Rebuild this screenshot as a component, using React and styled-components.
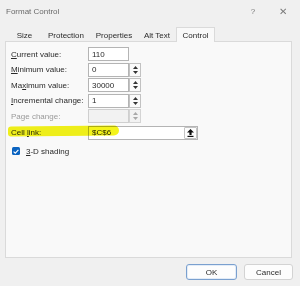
import React from "react";
import styled, { createGlobalStyle } from "styled-components";

const Global = createGlobalStyle`
  html, body { margin: 0; padding: 0; background: #f0f0f0; }
  body { font-family: "Liberation Sans", Arial, sans-serif; font-size: 8px; color: #2a2a2a; }
  * { box-sizing: border-box; }
`;

const Dialog = styled.div`
  width: 300px;
  height: 286px;
  background: #f0f0f0;
  display: flex;
  flex-direction: column;
  position: relative;
  overflow: hidden;
`;

const TitleBar = styled.div`
  height: 22px;
  display: flex;
  align-items: center;
  padding: 0 2px 0 6px;
  color: #6b6b6b;
  font-size: 8px;
`;

const Title = styled.div`
  flex: 1;
`;

const TitleButton = styled.div`
  width: 30px;
  text-align: center;
  color: #7a7a7a;
  font-size: ${(p) => p.$size || 8}px;
  font-weight: 300;
`;

const TabStrip = styled.div`
  display: flex;
  align-items: flex-end;
  margin: 5px 0 0 7px;
  height: 14px;
`;

const Tab = styled.div`
  width: ${(p) => p.$w}px;
  height: ${(p) => (p.$active ? 15 : 13)}px;
  display: flex;
  align-items: center;
  justify-content: center;
  background: ${(p) => (p.$active ? "#f9f9f9" : "#f0f0f0")};
  border: 1px solid ${(p) => (p.$active ? "#dadada" : "transparent")};
  border-bottom: none;
  color: #2a2a2a;
  position: relative;
  z-index: ${(p) => (p.$active ? 2 : 0)};
  margin-bottom: ${(p) => (p.$active ? -1 : 0)}px;
`;

const Panel = styled.div`
  margin: 0 8px 0 5px;
  height: 217px;
  background: #f9f9f9;
  border: 1px solid #dadada;
  padding: 5px 0 0 5px;
  position: relative;
`;

const Form = styled.div`
  display: grid;
  grid-template-columns: 77px auto;
  grid-auto-rows: 14px;
  row-gap: 1.6px;
  align-items: center;
  position: relative;
`;

const Label = styled.div`
  color: ${(p) => (p.$disabled ? "#9a9a9a" : "#2a2a2a")};
  position: relative;
  z-index: 1;
  white-space: nowrap;
`;

const U = styled.span`
  text-decoration: underline;
  text-underline-offset: 1px;
`;

const Field = styled.div`
  display: flex;
  height: 14px;
  width: ${(p) => p.$w}px;
  background: ${(p) => (p.$disabled ? "#f2f2f2" : "#ffffff")};
  border: 1px solid ${(p) => (p.$disabled ? "#cfcfcf" : "#b4b4b4")};
  align-items: center;
`;

const FieldText = styled.div`
  flex: 1;
  padding-left: 3px;
  color: #2a2a2a;
  position: relative;
  z-index: 1;
`;

const Spinner = styled.div`
  width: 12px;
  height: 14px;
  border: 1px solid ${(p) => (p.$disabled ? "#d4d4d4" : "#c2c2c2")};
  background: ${(p) => (p.$disabled ? "#f2f2f2" : "#fafafa")};
  display: flex;
  flex-direction: column;
  align-items: center;
  justify-content: center;
  gap: 2px;
`;

const SpinRow = styled.div`
  display: flex;
  align-items: center;
`;

const CellRow = styled.div`
  grid-column: 1 / -1;
  display: grid;
  grid-template-columns: 77px auto;
  align-items: center;
  margin-top: 2px;
  position: relative;
`;

const PickButton = styled.div`
  width: 13px;
  height: 12px;
  border: 1px solid #c4c4c4;
  border-radius: 1px;
  background: #fdfdfd;
  display: flex;
  align-items: center;
  justify-content: center;
`;

const Highlight = styled.div`
  position: absolute;
  left: -3px;
  top: 0px;
  width: 111px;
  height: 10px;
  background: #f4f41a;
  border-radius: 3px 5px 5px 3px;
  transform: skewY(-0.6deg);
  mix-blend-mode: multiply;
  z-index: 2;
  pointer-events: none;
`;

const CheckRow = styled.div`
  display: flex;
  align-items: center;
  gap: 6px;
  margin: 8px 0 0 1px;
`;

const Check = styled.div`
  width: 8px;
  height: 8px;
  border-radius: 1.5px;
  background: #0a63c0;
  display: flex;
  align-items: center;
  justify-content: center;
`;

const Footer = styled.div`
  display: flex;
  justify-content: flex-end;
  gap: 7px;
  padding: 6px 7px 0 0;
`;

const Button = styled.div`
  width: ${(p) => p.$w}px;
  height: 16px;
  border-radius: 3px;
  background: #fdfdfd;
  border: 1px solid ${(p) => (p.$primary ? "#7aa0cf" : "#d3d3d3")};
  box-shadow: ${(p) => (p.$primary ? "inset 0 0 0 1px #e3ecf7" : "none")};
  display: flex;
  align-items: center;
  justify-content: center;
  color: #2a2a2a;
`;

const Arrows = ({ disabled }) => (
  <Spinner $disabled={disabled}>
    <svg width="5" height="3" viewBox="0 0 5 3">
      <path d="M0 3 L2.5 0 L5 3 Z" fill={disabled ? "#a8a8a8" : "#333"} />
    </svg>
    <svg width="5" height="3" viewBox="0 0 5 3">
      <path d="M0 0 L2.5 3 L5 0 Z" fill={disabled ? "#a8a8a8" : "#333"} />
    </svg>
  </Spinner>
);

const SpinField = ({ value, disabled }) => (
  <SpinRow>
    <Field $w={41} $disabled={disabled}>
      <FieldText>{value}</FieldText>
    </Field>
    <Arrows disabled={disabled} />
  </SpinRow>
);

export default function App() {
  return (
    <>
      <Global />
      <Dialog>
        <TitleBar>
          <Title>Format Control</Title>
          <TitleButton>?</TitleButton>
          <TitleButton $size={10}>✕</TitleButton>
        </TitleBar>
        <TabStrip>
          <Tab $w={35}>Size</Tab>
          <Tab $w={48}>Protection</Tab>
          <Tab $w={48}>Properties</Tab>
          <Tab $w={38}>Alt Text</Tab>
          <Tab $w={39} $active>Control</Tab>
        </TabStrip>
        <Panel>
          <Form>
            <Label><U>C</U>urrent value:</Label>
            <Field $w={41}><FieldText>110</FieldText></Field>

            <Label><U>M</U>inimum value:</Label>
            <SpinField value="0" />

            <Label>Ma<U>x</U>imum value:</Label>
            <SpinField value="30000" />

            <Label><U>I</U>ncremental change:</Label>
            <SpinField value="1" />

            <Label $disabled>Page change:</Label>
            <SpinField value="" disabled />

            <CellRow>
              <Highlight />
              <Label>Cell <U>l</U>ink:</Label>
              <Field $w={110}>
                <FieldText>$C$6</FieldText>
                <PickButton>
                  <svg width="7" height="8" viewBox="0 0 7 8">
                    <path d="M3.5 0 L7 3.5 L4.6 3.5 L4.6 6 L2.4 6 L2.4 3.5 L0 3.5 Z" fill="#111" />
                    <rect x="0.5" y="6.8" width="6" height="1.2" fill="#111" />
                  </svg>
                </PickButton>
              </Field>
            </CellRow>
          </Form>
          <CheckRow>
            <Check>
              <svg width="6" height="5" viewBox="0 0 6 5">
                <path d="M0.6 2.6 L2.3 4.2 L5.4 0.8" stroke="#fff" strokeWidth="1.1" fill="none" />
              </svg>
            </Check>
            <Label><U>3</U>-D shading</Label>
          </CheckRow>
        </Panel>
        <Footer>
          <Button $w={51} $primary>OK</Button>
          <Button $w={49}>Cancel</Button>
        </Footer>
      </Dialog>
    </>
  );
}
